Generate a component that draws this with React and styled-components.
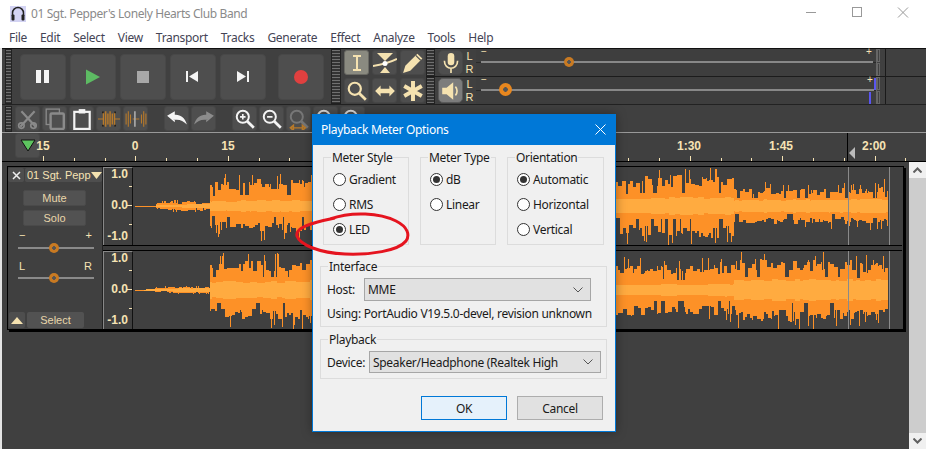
import React from 'react';
import styled, { createGlobalStyle } from 'styled-components';

const Global = createGlobalStyle`
  html, body { margin: 0; padding: 0; background: #fff; }
  * { box-sizing: border-box; }
`;

const CREAM = '#f6e3b4';
const UI = `"Noto Sans", "Open Sans", sans-serif`;
const ARIAL = `"Liberation Sans", Arial, sans-serif`;

const Page = styled.div`
  position: relative; width: 926px; height: 449px; overflow: hidden;
  display: flex; flex-direction: column; font-family: ${UI}; background: #fff;
`;
const TitleBar = styled.div`
  height: 27px; display: flex; align-items: center; padding-left: 10px; flex: none;
`;
const AppIcon = styled.svg`width: 16px; height: 16px; background: #d3d3f3; margin-right: 5px; flex: none;`;
const TitleText = styled.span`font-size: 12px; color: #8a8a8a; letter-spacing: -0.4px; flex: 1; white-space: nowrap;`;
const WinButton = styled.svg`width: 46px; height: 27px; flex: none;`;
const MenuBar = styled.div`
  height: 21px; flex: none; display: flex; align-items: center; gap: 13px; padding: 0 0 0 9px;
`;
const MenuItem = styled.span`font-size: 12px; color: #444455; letter-spacing: -0.3px;`;
const Workspace = styled.div`
  flex: 1; display: flex; flex-direction: column; min-height: 0; background: #404040;
  border-left: 2px solid #e4e4e4;
`;
const TopRow = styled.div`
  height: 57px; flex: none; display: flex; padding-left: 3px; border-top: 1px solid #111; border-bottom: 1px solid #222;
`;
const Grip = styled.div`
  flex: none; width: ${p => p.$w || 7}px; margin-left: ${p => p.$ml || 0}px;
  border: 1px solid #222;
  background: repeating-linear-gradient(180deg, #707070 0 1px, #333 1px 3px);
`;
const TransportGroup = styled.div`
  display: flex; gap: 4px; align-items: center; margin-left: 8px;
`;
const TransportButton = styled.div`
  width: 46px; height: 46px; border-radius: 4px; background: #4e4e4e;
  border: 1px solid #484848; display: flex; align-items: center; justify-content: center;
  margin-left: ${p => p.$ml || 0}px;
`;
const ToolsGrid = styled.div`
  display: grid; grid-template-columns: repeat(3, 25px); grid-auto-rows: 25px; gap: 3px;
  align-content: center; margin-left: 3px;
`;
const ToolButton = styled.div`
  border-radius: 3px; display: flex; align-items: center; justify-content: center;
  background: ${p => p.$active ? '#8a8a80' : '#4e4e4e'};
  border: 1px solid ${p => p.$active ? '#6a6a64' : '#474747'};
`;
const MeterStack = styled.div`flex: 1; display: flex; flex-direction: column; margin-left: 1px;`;
const MeterRow = styled.div`
  flex: 1; display: flex; align-items: stretch;
  & + & { border-top: 1px solid #1c1c1c; }
`;
const MeterButtonWrap = styled.div`display: flex; align-items: center; margin-left: 3px;`;
const MeterButton = styled.div`
  width: 25px; height: 25px; border-radius: 5px; display: flex; align-items: center; justify-content: center;
  background: ${p => p.$on ? '#7c7c7c' : '#4e4e4e'}; border: 1px solid ${p => p.$on ? '#5a5a5a' : '#474747'};
`;
const LRLabels = styled.div`
  width: 13px; display: flex; flex-direction: column; justify-content: space-around; align-items: center;
  font: 11px ${ARIAL}; color: ${CREAM}; flex: none;
`;
const MeterTrack = styled.div`
  position: relative; width: 400px; flex: none; display: flex; flex-direction: column;
`;
const MeterChannel = styled.div`flex: 1; background: #3e3e3e; & + & { border-top: 1px solid #2a2a2a; }`;
const SliderLine = styled.div`
  position: absolute; left: ${p => p.$l}px; right: ${p => p.$r}px; top: 12px; height: 2px; background: #888;
`;
const MeterSign = styled.span`
  position: absolute; top: -3px; left: ${p => p.$l}px; font: 10px ${ARIAL}; color: ${CREAM};
`;
const Thumb = styled.div`
  position: absolute; border-radius: 50%; left: ${p => p.$x}px; top: ${p => p.$y}px;
  width: ${p => p.$s}px; height: ${p => p.$s}px;
  background: radial-gradient(circle, #555 0 22%, ${p => p.$c} 28%);
`;
const LevelBar = styled.div`
  position: absolute; background: #5a55f0; width: 2px; height: 12px; left: ${p => p.$x}px; top: ${p => p.$y}px;
`;
const MeterEnd = styled.div`
  flex: none; width: 10px; margin-left: ${p => p.$ml}px; display: flex; flex-direction: column; gap: 1px; padding: 0 5px 0 0;
  border-right: 1px solid #1a1a1a; border-left: 1px solid #666;
`;
const MeterEndCell = styled.div`flex: 1; border: 1px solid #666;`;
const EditRow = styled.div`
  height: 28px; flex: none; display: flex; align-items: center; padding-left: 3px;
  border-bottom: 1px solid #999;
`;
const EditGrip = styled(Grip)`height: 26px; margin-right: 3px;`;
const EditGroup = styled.div`display: flex; gap: 2px; margin-right: ${p => p.$mr || 0}px;`;
const EditButton = styled.div`
  width: 25px; height: 25px; border-radius: 3px; background: #4e4e4e; border: 1px solid #474747;
  display: flex; align-items: center; justify-content: center; overflow: hidden;
`;
const Ruler = styled.div`
  position: relative; height: 29px; flex: none; border-bottom: 1px solid #000; background: #404040;
`;
const PlayheadButton = styled.div`
  position: absolute; left: 13px; top: 0; width: 25px; height: 25px; background: #4e4e4e; border-radius: 3px;
  border: 1px solid #474747; display: flex; align-items: center; justify-content: center;
`;
const RulerLabel = styled.span`
  position: absolute; top: 6px; left: ${p => p.$x - 2}px; transform: translateX(-50%);
  font: bold 12px ${ARIAL}; color: ${CREAM};
`;
const RulerTick = styled.i`
  position: absolute; bottom: 0; width: 1px; left: ${p => p.$x - 2}px; height: ${p => p.$h}px; background: ${CREAM};
`;
const RulerEnd = styled.i`position: absolute; left: 845px; top: 0; bottom: 0; width: 1px; background: #000;`;
const RulerMark = styled.svg`position: absolute; left: 846px; top: 13px; width: 8px; height: 14px;`;
const Main = styled.div`flex: 1; display: flex; min-height: 0;`;
const TrackArea = styled.div`flex: 1; padding: 4px 0 0 5px; min-width: 0;`;
const Track = styled.div`
  width: 897px; height: 164px; display: flex; border: 1px solid #000; box-shadow: 2px 2px 0 #000; background: #404040;
`;
const TrackPanel = styled.div`
  position: relative; width: 95px; flex: none; border-right: 1px solid #222; display: flex; flex-direction: column; align-items: stretch;
`;
const PanelHeader = styled.div`display: flex; gap: 1px; height: 14px; margin-top: 1px;`;
const CloseBox = styled.div`
  width: 16px; flex: none; background: #4e4e4e; border-radius: 2px; display: flex; align-items: center; justify-content: center;
`;
const TrackName = styled.div`
  flex: 1; min-width: 0; background: #4e4e4e; border-radius: 2px; padding: 0 1px 0 2px; font: 11px ${ARIAL}; color: ${CREAM};
  display: flex; align-items: center; justify-content: space-between; white-space: nowrap; overflow: hidden;
`;
const PanelButton = styled.div`
  width: 63px; height: 16px; margin: ${p => p.$mt}px 0 0 15px; border-radius: 2px; background: #525252; border: 1px solid #4a4a4a;
  display: flex; align-items: center; justify-content: center; font: 11px ${ARIAL}; color: #e8d6aa;
`;
const Signs = styled.div`
  display: flex; justify-content: space-between; padding: 0 10px 0 11px; font: 11px ${ARIAL}; color: ${CREAM};
  margin-top: ${p => p.$mt}px; height: 13px; line-height: 13px;
`;
const PanelSlider = styled.div`
  position: relative; margin: ${p => p.$mt}px 8px 0 10px; height: 2px; background: #8a8a8a;
`;
const PanelFoot = styled.div`display: flex; gap: 2px; position: absolute; left: 1px; bottom: 1px;`;
const Collapse = styled.div`
  width: 16px; height: 16px; background: #4e4e4e; border-radius: 2px; display: flex; align-items: center; justify-content: center;
`;
const SelectButton = styled.div`
  width: 57px; height: 16px; background: #525252; border-radius: 2px; display: flex; align-items: center; justify-content: center;
  font: 11px ${ARIAL}; color: #e8d6aa;
`;
const Channels = styled.div`flex: 1; display: flex; flex-direction: column;`;
const ChannelRow = styled.div`flex: none; height: 78px; display: flex;`;
const ChannelGap = styled.div`flex: 1; border-top: 1px solid #000; border-bottom: 1px solid #000; background: #3a3a3a; margin-right: 1px;`;
const VRuler = styled.div`
  position: relative; width: 30px; flex: none; border-left: 1px solid #888; border-top: 1px solid #888;
  border-right: 1px solid #111; font: bold 12px ${ARIAL}; color: ${CREAM};
`;
const VLabel = styled.span`position: absolute; right: 4px; top: ${p => p.$y}px; line-height: 12px;`;
const VTick = styled.i`position: absolute; right: 0; top: ${p => p.$y}px; width: ${p => p.$w}px; height: 1px; background: ${CREAM};`;
const WaveSvg = styled.svg`flex: 1; display: block; width: 769px; height: 78px;`;
const Scrollbar = styled.div`
  width: 17px; flex: none; background: #cdcdcd; display: flex; flex-direction: column; justify-content: space-between;
`;
const ScrollEnd = styled.div`
  height: 16px; background: #f0f0f0; display: flex; align-items: center; justify-content: center;
`;
const Dialog = styled.div`
  position: absolute; left: 312px; top: 114px; width: 304px; height: 318px;
  border: 1px solid #0078d7; border-top: 0; background: #f0f0f0; box-shadow: 0 0 10px rgba(0,0,0,.35);
  display: flex; flex-direction: column; color: #1a1a1a; font-size: 12px; letter-spacing: -0.3px;
`;
const DialogTitle = styled.div`
  height: 31px; flex: none; background: #0078d7; color: #fff; display: flex; align-items: center; justify-content: space-between;
  padding: 0 10px 0 9px; margin: 0 -1px; font-size: 12px;
`;
const DialogBody = styled.div`flex: 1; display: flex; flex-direction: column; padding: 12px 11px 0 7px;`;
const Columns = styled.div`display: flex; gap: 11px; margin-left: 3px;`;
const Group = styled.div`
  position: relative; width: ${p => p.$w}px; height: ${p => p.$h}px; flex: none;
  border: 1px solid #dcdcdc; margin-top: ${p => p.$mt || 0}px;
`;
const Legend = styled.span`
  position: absolute; left: ${p => p.$l}px; top: -9px; background: #f0f0f0; padding: 0 1px; line-height: 18px; white-space: nowrap;
`;
const RadioList = styled.div`display: flex; flex-direction: column; padding: 9px 0 0 9px;`;
const RadioRow = styled.div`height: 25px; display: flex; align-items: center; gap: 3px;`;
const RadioDot = styled.span`
  width: 13px; height: 13px; border-radius: 50%; border: 1px solid #333; background: #fff; flex: none; display: flex; align-items: center; justify-content: center;
  &::after { content: ''; width: 7px; height: 7px; border-radius: 50%; background: ${p => p.$on ? '#333' : 'transparent'}; }
`;
const FieldRow = styled.div`display: flex; align-items: center; padding: ${p => p.$pt}px 0 0 6px; white-space: nowrap;`;
const Combo = styled.div`
  height: ${p => p.$h}px; width: ${p => p.$w}px; margin-left: auto; margin-right: ${p => p.$mr}px;
  border: 1px solid #a6a6a6; background: #e1e1e1; display: flex; align-items: center; justify-content: space-between; padding: 0 7px 0 ${p => p.$pl}px;
`;
const Actions = styled.div`display: flex; justify-content: flex-end; gap: 10px; margin-top: 17px; padding-right: 1px;`;
const DButton = styled.div`
  width: 86px; height: 24px; display: flex; align-items: center; justify-content: center; font-size: 12px;
  background: ${p => p.$primary ? '#e5f1fb' : '#e1e1e1'}; border: 1px solid ${p => p.$primary ? '#0078d7' : '#adadad'};
`;
const RedEllipse = styled.svg`position: absolute; left: 290px; top: 208px; width: 126px; height: 52px; pointer-events: none;`;

/* ---- icons ---- */
const I = ({ s = 20, children, vb = 20 }) => (
  <svg width={s} height={s} viewBox={`0 0 ${vb} ${vb}`} fill="none" style={{ flex: 'none' }}>{children}</svg>
);
const W = '#f4f4f4', G = '#8a8a8a', T = '#f5e2b0', OR = '#b87a2a';

const transport = [
  <I key="p"><rect x="3" y="3" width="5" height="13" fill={W}/><rect x="11" y="3" width="5" height="13" fill={W}/></I>,
  <I key="pl"><path d="M3 2.5 L17 10 L3 17.5Z" fill="#5dbb63"/></I>,
  <I key="st"><rect x="4" y="4" width="12" height="12" fill="#a8a8a8"/></I>,
  <I key="sk"><rect x="3" y="4" width="2" height="11" fill={W}/><path d="M15 4 L6 9.5 L15 15Z" fill={W}/></I>,
  <I key="se"><path d="M4 4 L13 9.5 L4 15Z" fill={W}/><rect x="14" y="4" width="2" height="11" fill={W}/></I>,
  <I key="r"><circle cx="10" cy="10" r="7" fill="#e0403f"/></I>,
];

const tools = [
  { a: true, i: <I><path d="M6 3h8M6 17h8M10 3v14" stroke={T} strokeWidth="2"/></I> },
  { i: <I s={24} vb={24}><path d="M4 2h16l-8 8zM7 22h10l-5-6z" fill={T}/><path d="M0 15 C8 14 16 12 24 8" stroke={T} strokeWidth="2"/><circle cx="12" cy="12.5" r="2.5" fill="#fff"/></I> },
  { i: <I s={22}><path d="M1 19 L3 12.5 L14 1.5 L18.500 6 L7.500 17Z" fill={T}/><path d="M12.500 3 L17 7.500" stroke="#4e4e4e"/></I> },
  { i: <I s={22}><circle cx="8" cy="8" r="5.500" stroke={T} strokeWidth="2"/><path d="M12 12 L18 18" stroke={T} strokeWidth="2.500"/></I> },
  { i: <I s={22}><path d="M1 10 L6 5 V8 H14 V5 L19 10 L14 15 V12 H6 V15Z" fill={T}/></I> },
  { i: <I s={22}><path d="M10 1V19M2 5.500 L18 14.500M18 5.500 L2 14.500" stroke={T} strokeWidth="3.600"/></I> },
];

const Rw = ({ flip }) => (
  <svg width="22" height="16" viewBox="0 0 20 14"><path d="M1 4 L8 0 V10Z M6 3.500 C12 2 17 5 19 12 C15 8 12 7 6 8Z" fill={flip ? '#8c8c8c' : W} transform={flip ? 'matrix(-1 0 0 1 20 0)' : undefined}/></svg>
);
const Mag = ({ plus, minus, c = W, extra }) => (
  <I s={22}>
    <circle cx="8" cy="8" r="5.500" stroke={c} strokeWidth="1.800"/>
    <path d="M12 12 L18 18" stroke={c} strokeWidth="2.500"/>
    {(plus || minus) && <path d="M5.500 8h5" stroke={c} strokeWidth="1.500"/>}
    {plus && <path d="M8 5.500v5" stroke={c} strokeWidth="1.500"/>}
    {extra && <path d="M2 18h14M2 18l3-2.500v5zM16 18l-3-2.500v5z" stroke={OR} strokeWidth="1.200"/>}
  </I>
);
const TrimIcon = () => (
  <I s={22}>
    <path d="M0 10h5M15 10h5" stroke={OR} strokeWidth="1"/>
    <path d="M5 4v12M7 3v14M9 5v10M11 3v14M13 5v10M15 4v12" stroke={OR} strokeWidth="1.300"/>
    <path d="M4 4h1M15 4h1M4 16h1M15 16h1" stroke="#000" strokeWidth="1.500"/>
  </I>
);
const SilenceIcon = () => (
  <I s={22}>
    <path d="M1 5v10M3 3v14M5 6v8M15 6v8M17 3v14M19 5v10" stroke={OR} strokeWidth="1"/>
    <path d="M7 10h6" stroke={OR} strokeWidth="1"/>
    <path d="M9 3v14" stroke="#aaa" strokeWidth="1.500"/>
  </I>
);

const edit1 = [
  <I key="c" s={22}><path d="M4 3 L17 17M16 3 L3 17" stroke={G} strokeWidth="2"/><circle cx="4" cy="16" r="2.500" stroke={G} strokeWidth="1.500"/><circle cx="15" cy="16" r="2.500" stroke={G} strokeWidth="1.500"/></I>,
  <I key="co" s={22}><rect x="2" y="1" width="12" height="14" stroke={G} strokeWidth="1.200"/><rect x="6" y="5" width="12" height="14" rx="1" fill="#4e4e4e" stroke={G} strokeWidth="2.200"/></I>,
  <I key="pa" s={22}><rect x="3" y="3.500" width="14" height="15.500" stroke={W} strokeWidth="2"/><rect x="7" y="1" width="6" height="4" fill={W}/></I>,
  <TrimIcon key="t"/>,
  <SilenceIcon key="s"/>,
];

const seeded = (seed) => {
  let s = seed;
  return () => { s = (s * 16807) % 2147483647; return (s - 1) / 2147483646; };
};
const interp = (pts, x) => {
  for (let i = 0; i < pts.length - 1; i++) {
    if (x >= pts[i][0] && x < pts[i + 1][0]) {
      const t = (x - pts[i][0]) / (pts[i + 1][0] - pts[i][0]);
      return pts[i][1] + (pts[i + 1][1] - pts[i][1]) * t;
    }
  }
  return 0;
};
const makeWave = (seed, outer, inner) => {
  const r = seeded(seed);
  let o = '', n = '';
  let runU = 0, runD = 0, fu = 1, fd = 1, iRun = 0, iF = 1;
  for (let x = 135; x < 888; x++) {
    const b = interp(outer, x), ib = interp(inner, x);
    if (runU-- <= 0) { runU = Math.floor(r() * 4); fu = 0.62 + r() * 0.38; if (r() < 0.12) fu = 0.42; }
    if (runD-- <= 0) { runD = Math.floor(r() * 4); fd = 0.62 + r() * 0.38; if (r() < 0.12) fd = 0.42; }
    if (iRun-- <= 0) { iRun = 2 + Math.floor(r() * 6); iF = 0.85 + r() * 0.25; }
    const big = b > 2;
    let up = big ? b * fu : b, dn = big ? b * fd : b;
    if (big && r() < 0.07) up = b * (1.1 + r() * 0.2);
    if (big && r() < 0.07) dn = b * (1.1 + r() * 0.2);
    const X = x - 133;
    o += `M${X} ${(39 - Math.max(up, .5)).toFixed(1)}V${(39 + Math.max(dn, .5)).toFixed(1)}`;
    if (ib > 0) n += `M${X} ${(39 - ib * iF).toFixed(1)}V${(39 + ib * iF).toFixed(1)}`;
  }
  return { o, n };
};

const WAVE_A = makeWave(4711,
  [[135,.5],[155,.5],[157,3],[160,4],[177,5],[190,5.500],[205,5],[209,3],[210,24],[260,27],[313,27],[616,29],[690,32],[733,32],[734,19],[800,18],[847,18],[880,19],[888,23]],
  [[155,0],[156,1],[209,2],[210,5],[313,6],[616,7],[733,9],[734,6],[888,7]]);
const WAVE_B = makeWave(90210,
  [[135,.5],[154,.5],[155,2.500],[177,3.500],[205,3],[209,3],[210,30],[313,30],[616,26],[680,25],[734,25],[735,32],[847,31],[875,27],[888,29]],
  [[135,0],[155,1],[209,2],[210,8],[313,9],[616,5],[733,6],[734,10],[888,10]]);

const Wave = ({ d }) => (
  <WaveSvg viewBox="0 0 769 78" preserveAspectRatio="none" shapeRendering="crispEdges">
    <path d={d.o} stroke="#fd9127" strokeWidth="1"/>
    <path d={d.n} stroke="#ffab40" strokeWidth="1"/>
    <path d="M714.500 0V78M755.500 0V78" stroke="#8a8a8a" strokeWidth="1"/>
  </WaveSvg>
);
const ChannelRuler = () => (
  <VRuler>
    <VLabel $y={0}>1.0</VLabel>
    <VLabel $y={31}>0.0</VLabel>
    <VLabel $y={62}>-1.0</VLabel>
    <VTick $y={18} $w={3}/><VTick $y={37} $w={5}/><VTick $y={56} $w={3}/>
  </VRuler>
);

const RULER = [['15',43],['0',135],['15',228],['30',320],['45',412],['1:00',505],['1:15',597],['1:30',689],['1:45',781],['2:00',874]];
const TICKS = Array.from({ length: 29 }, (_, i) => 43 + i * 30.8);

const Radio = ({ on, children }) => (
  <RadioRow><RadioDot $on={on}/><span>{children}</span></RadioRow>
);
const Chevron = () => (
  <svg width="10" height="6" viewBox="0 0 10 6"><path d="M.5.5 L5 5 L9.500.5" stroke="#555" fill="none"/></svg>
);

export default function App() {
  return (
    <Page>
      <Global/>
      <TitleBar>
        <AppIcon viewBox="0 0 16 16">
          <path d="M2.500 10 V7 a5.500 5.500 0 0 1 11 0 V10" stroke="#222" strokeWidth="1.500" fill="none"/>
          <rect x="1.500" y="8.500" width="3" height="6" rx="1" fill="#222"/><rect x="11.500" y="8.500" width="3" height="6" rx="1" fill="#222"/>
        </AppIcon>
        <TitleText>01 Sgt. Pepper's Lonely Hearts Club Band</TitleText>
        <WinButton viewBox="0 0 46 27"><path d="M18 12.500h10" stroke="#999"/></WinButton>
        <WinButton viewBox="0 0 46 27"><rect x="18.500" y="7.500" width="9" height="9" stroke="#999" fill="none"/></WinButton>
        <WinButton viewBox="0 0 46 27"><path d="M18 7.500 L28 17.500 M28 7.500 L18 17.500" stroke="#999" fill="none"/></WinButton>
      </TitleBar>
      <MenuBar>
        {['File','Edit','Select','View','Transport','Tracks','Generate','Effect','Analyze','Tools','Help'].map(m => <MenuItem key={m}>{m}</MenuItem>)}
      </MenuBar>
      <Workspace>
        <TopRow>
          <Grip/>
          <TransportGroup>
            {transport.map((ic, i) => <TransportButton key={i} $ml={i === 5 ? 8 : 0}>{ic}</TransportButton>)}
          </TransportGroup>
          <Grip $w={10} $ml={7}/>
          <ToolsGrid>
            {tools.map((t, i) => <ToolButton key={i} $active={t.a}>{t.i}</ToolButton>)}
          </ToolsGrid>
          <MeterStack>
            <MeterRow>
              <Grip $w={9}/>
              <MeterButtonWrap>
                <MeterButton>
                  <I s={22}><rect x="7" y="1" width="6" height="11" rx="3" fill={T}/><path d="M4 8 C4 17 16 17 16 8M10 14v5" stroke={T} strokeWidth="1.500"/></I>
                </MeterButton>
              </MeterButtonWrap>
              <LRLabels><span>L</span><span>R</span></LRLabels>
              <MeterTrack>
                <MeterChannel/><MeterChannel/>
                <SliderLine $l={5} $r={3}/>
                <MeterSign $l={5}>−</MeterSign>
                <MeterSign $l={390}>+</MeterSign>
                <Thumb $x={88} $y={8} $s={10} $c="#c97a22"/>
              </MeterTrack>
              <MeterEnd $ml={0}><MeterEndCell/><MeterEndCell/></MeterEnd>
            </MeterRow>
            <MeterRow>
              <Grip $w={9}/>
              <MeterButtonWrap>
                <MeterButton $on>
                  <I s={22}><path d="M2 7h4l6-5v16l-6-5H2Z" fill={T}/><path d="M14 6 C16 8 16 12 14 14" stroke={T} strokeWidth="1.500"/></I>
                </MeterButton>
              </MeterButtonWrap>
              <LRLabels><span>L</span><span>R</span></LRLabels>
              <MeterTrack>
                <MeterChannel/><MeterChannel/>
                <SliderLine $l={5} $r={2}/>
                <MeterSign $l={391}>+</MeterSign>
                <MeterSign $l={5}>−</MeterSign>
                <Thumb $x={23} $y={6} $s={13} $c="#e8871e"/>
                <LevelBar $x={398} $y={1}/>
                <LevelBar $x={393} $y={15}/>
              </MeterTrack>
              <MeterEnd $ml={0}><MeterEndCell/><MeterEndCell/></MeterEnd>
            </MeterRow>
          </MeterStack>
        </TopRow>
        <EditRow>
          <EditGrip/>
          <EditGroup $mr={16}>{edit1.map((ic, i) => <EditButton key={i}>{ic}</EditButton>)}</EditGroup>
          <EditGroup $mr={16}>
            <EditButton><Rw/></EditButton>
            <EditButton><Rw flip/></EditButton>
          </EditGroup>
          <EditGroup>
            <EditButton><Mag plus/></EditButton>
            <EditButton><Mag minus/></EditButton>
            <EditButton><Mag c="#777" extra/></EditButton>
            <EditButton><Mag c="#ddd"/></EditButton>
            <EditButton><Mag c="#ddd"/></EditButton>
          </EditGroup>
        </EditRow>
        <Ruler>
          <PlayheadButton>
            <svg width="16" height="13" viewBox="0 0 16 13"><path d="M1 1 H15 L8 12Z" fill="#5dc45f" stroke="#111"/></svg>
          </PlayheadButton>
          {RULER.map(([t, x]) => <RulerLabel key={t + x} $x={x}>{t}</RulerLabel>)}
          {TICKS.map((x, i) => <RulerTick key={i} $x={Math.round(x)} $h={i % 3 === 0 ? 5 : 3}/>)}
          <RulerEnd/>
          <RulerMark viewBox="0 0 8 14"><path d="M7 1V13L1 7Z" fill="#bbb"/></RulerMark>
        </Ruler>
        <Main>
          <TrackArea>
            <Track>
              <TrackPanel>
                <PanelHeader>
                  <CloseBox>
                    <svg width="9" height="9" viewBox="0 0 9 9"><path d="M1 1 L8 8M8 1 L1 8" stroke="#eee" strokeWidth="1.500"/></svg>
                  </CloseBox>
                  <TrackName>
                    <span>01 Sgt. Pepp</span>
                    <svg width="11" height="7" viewBox="0 0 11 7" style={{ flex: 'none' }}><path d="M0 0H11L5.500 7Z" fill={T}/></svg>
                  </TrackName>
                </PanelHeader>
                <PanelButton $mt={8}>Mute</PanelButton>
                <PanelButton $mt={4}>Solo</PanelButton>
                <Signs $mt={3}><span>−</span><span>+</span></Signs>
                <PanelSlider $mt={5}><Thumb $x={31} $y={-4} $s={10} $c="#c97a22"/></PanelSlider>
                <Signs $mt={11}><span>L</span><span>R</span></Signs>
                <PanelSlider $mt={4}><Thumb $x={31} $y={-4} $s={10} $c="#c97a22"/></PanelSlider>
                <PanelFoot>
                  <Collapse>
                    <svg width="12" height="7" viewBox="0 0 12 7"><path d="M0 7H12L6 0Z" fill={T}/></svg>
                  </Collapse>
                  <SelectButton>Select</SelectButton>
                </PanelFoot>
              </TrackPanel>
              <Channels>
                <ChannelRow><ChannelRuler/><Wave d={WAVE_A}/></ChannelRow>
                <ChannelGap/>
                <ChannelRow><ChannelRuler/><Wave d={WAVE_B}/></ChannelRow>
              </Channels>
            </Track>
          </TrackArea>
          <Scrollbar>
            <ScrollEnd><svg width="9" height="6" viewBox="0 0 9 6"><path d="M.5 5.500 L4.500 1.500 L8.500 5.500" stroke="#606060" strokeWidth="2" fill="none"/></svg></ScrollEnd>
            <ScrollEnd><svg width="9" height="6" viewBox="0 0 9 6"><path d="M.5.5 L4.500 4.500 L8.500.5" stroke="#606060" strokeWidth="2" fill="none"/></svg></ScrollEnd>
          </Scrollbar>
        </Main>
      </Workspace>

      <Dialog>
        <DialogTitle>
          <span>Playback Meter Options</span>
          <svg width="11" height="11" viewBox="0 0 11 11"><path d="M.5.5 L10.500 10.500M10.500.5 L.5 10.500" stroke="#fff"/></svg>
        </DialogTitle>
        <DialogBody>
          <Columns>
            <Group $w={86} $h={88}>
              <Legend $l={7}>Meter Style</Legend>
              <RadioList><Radio>Gradient</Radio><Radio>RMS</Radio><Radio on>LED</Radio></RadioList>
            </Group>
            <Group $w={76} $h={88}>
              <Legend $l={7}>Meter Type</Legend>
              <RadioList><Radio on>dB</Radio><Radio>Linear</Radio></RadioList>
            </Group>
            <Group $w={97} $h={88}>
              <Legend $l={7}>Orientation</Legend>
              <RadioList><Radio on>Automatic</Radio><Radio>Horizontal</Radio><Radio>Vertical</Radio></RadioList>
            </Group>
          </Columns>
          <Group $w={287} $h={61} $mt={21}>
            <Legend $l={7}>Interface</Legend>
            <FieldRow $pt={11}>
              <span>Host:</span>
              <Combo $w={227} $h={23} $mr={15} $pl={3}><span>MME</span><Chevron/></Combo>
            </FieldRow>
            <FieldRow $pt={4}>Using: PortAudio V19.5.0-devel, revision unknown</FieldRow>
          </Group>
          <Group $w={287} $h={40} $mt={12}>
            <Legend $l={7}>Playback</Legend>
            <FieldRow $pt={11}>
              <span>Device:</span>
              <Combo $w={232} $h={22} $mr={5} $pl={3}><span>Speaker/Headphone (Realtek High</span><Chevron/></Combo>
            </FieldRow>
          </Group>
          <Actions>
            <DButton $primary>OK</DButton>
            <DButton>Cancel</DButton>
          </Actions>
        </DialogBody>
      </Dialog>

      <RedEllipse viewBox="290 208 126 52">
        <path d="M330 219 C352 211 380 213 396 221 C408 227 410 235 406 241 C398 251 370 255 345 254 C320 253 300 245 297 236 C295 228 310 223 335 218"
          stroke="#e5141f" strokeWidth="3" fill="none"/>
      </RedEllipse>
    </Page>
  );
}
